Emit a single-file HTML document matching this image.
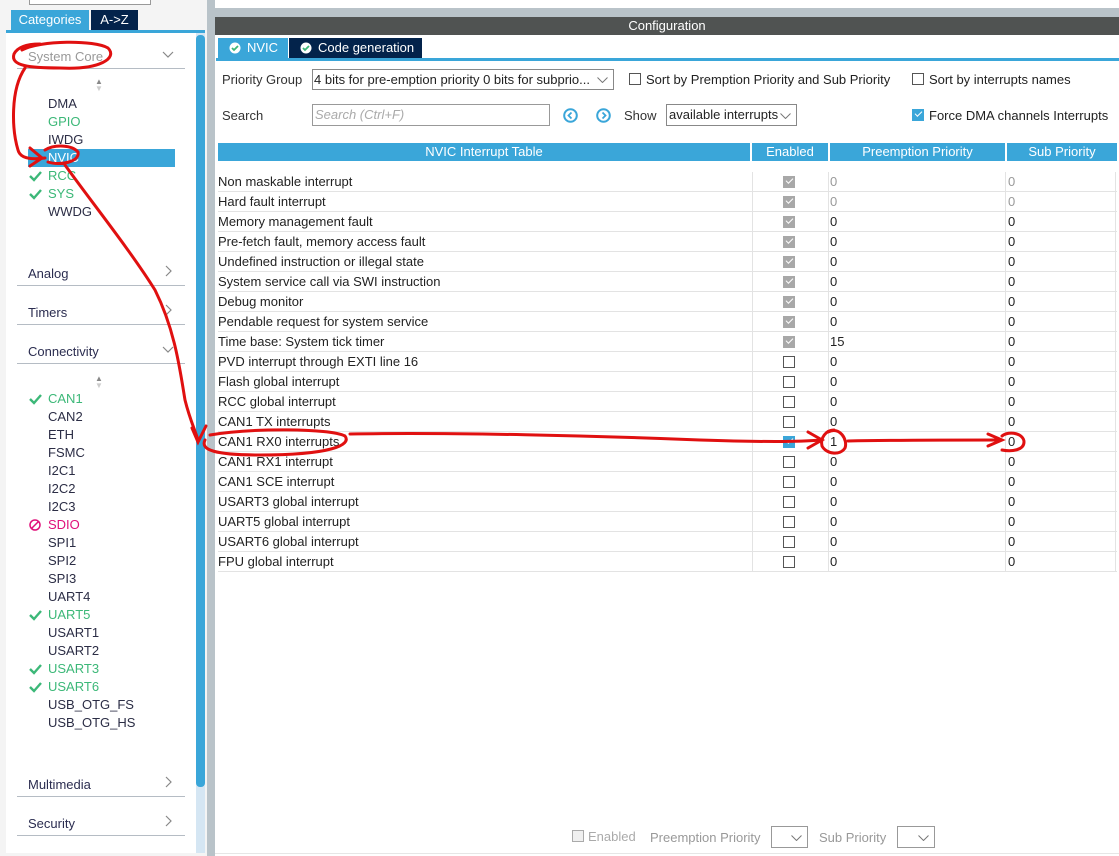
<!DOCTYPE html>
<html><head><meta charset="utf-8"><style>
*{margin:0;padding:0;box-sizing:border-box}
body{width:1119px;height:856px;overflow:hidden;background:#fff;font-family:"Liberation Sans",sans-serif;font-size:13px;color:#222;position:relative}
.a{position:absolute;white-space:nowrap}
.blue{background:#3aa6d9}
.navy{background:#03234b}
.si{position:absolute;left:48px;font-size:13px;color:#2b2d45;line-height:18px}
.g{color:#3cb878}
.ck{position:absolute;left:29px;top:0;width:13px;height:18px}
.cat{position:absolute;left:28px;font-size:13px;color:#2b2d50}
.cl{position:absolute;left:17px;width:168px;height:1px;background:#b5bcc4}
.chev{position:absolute;left:162px;width:12px;height:12px}
.row{position:absolute;left:218px;width:899px;height:20px;border-bottom:1px solid #e3e3e3;font-size:13px;line-height:19px}
.row .n{position:absolute;left:0}
.row .v1{position:absolute;left:612px}
.row .v2{position:absolute;left:790px}
.row .c1{position:absolute;left:534px;top:0;width:1px;height:20px;background:#e3e3e3}
.row .c2{position:absolute;left:610px;top:0;width:1px;height:20px;background:#e3e3e3}
.row .c3{position:absolute;left:787px;top:0;width:1px;height:20px;background:#e3e3e3}
.row .c4{position:absolute;left:897px;top:0;width:1px;height:20px;background:#e3e3e3}
.cb{position:absolute;left:565px;top:4px;width:12px;height:12px;border:1px solid #555;background:#fff}
.cbg,.cbb{position:absolute;left:565px;top:4px;width:12px;height:12px;background:#a8a8a8}
.cbb{background:#3aa6d9}
.cbg::after,.cbb::after{content:"";position:absolute;left:3px;top:2px;width:6px;height:3px;border-left:1.5px solid #fff;border-bottom:1.5px solid #fff;transform:rotate(-45deg)}
.gr{color:#999}
.dd{position:absolute;right:5px;top:7px;width:11px;height:6px}
</style></head><body>
<svg width="0" height="0" style="position:absolute">
<defs>
<symbol id="chk" viewBox="0 0 13 18"><path d="M1 9 L5 13 L12 5" fill="none" stroke="#3cb878" stroke-width="2.4"/></symbol>
<symbol id="dn" viewBox="0 0 12 12"><path d="M1 4 L6 9 L11 4" fill="none" stroke="#888" stroke-width="1.2"/></symbol>
<symbol id="rt" viewBox="0 0 12 12"><path d="M4 1 L9 6 L4 11" fill="none" stroke="#888" stroke-width="1.2"/></symbol>
<symbol id="dd" viewBox="0 0 11 6"><path d="M0.5 0.5 L5.5 5.5 L10.5 0.5" fill="none" stroke="#777" stroke-width="1"/></symbol>
</defs></svg>
<!-- left panel -->
<div class="a" style="left:0;top:0;width:207px;height:856px;background:#f4f4f4"></div>
<div class="a" style="left:29px;top:0;width:122px;height:5px;border:1px solid #999;border-top:none;background:#fff"></div>
<div class="a blue" style="left:11px;top:10px;width:78px;height:20px;color:#fff;font-size:13px;line-height:20px;text-align:center">Categories</div>
<div class="a navy" style="left:91px;top:10px;width:47px;height:20px;color:#fff;font-size:13px;line-height:20px;text-align:center">A-&gt;Z</div>
<div class="a blue" style="left:6px;top:30px;width:199px;height:3px"></div>
<div class="a" style="left:6px;top:33px;width:190px;height:820px;background:#fff"></div>
<div class="a" style="left:196px;top:33px;width:9px;height:820px;background:#d5e6f3"></div>
<div class="a blue" style="left:196px;top:35px;width:9px;height:752px;border-radius:4px"></div>

<div class="cat" style="top:49px;color:#999">System Core</div><svg class="chev" style="top:48px"><use href="#dn"/></svg>
<div class="cl" style="top:68px"></div>
<div class="a" style="left:95px;top:78px;font-size:8px;color:#888;line-height:7px">▲<br><span style="color:#ccc">▼</span></div>
<div class="si" style="top:95px">DMA</div>
<div class="si g" style="top:113px">GPIO</div>
<div class="si" style="top:131px">IWDG</div>
<div class="a blue" style="left:28px;top:149px;width:147px;height:18px"></div>
<div class="si" style="top:149px;color:#fff">NVIC</div>
<svg class="ck" style="top:167px"><use href="#chk"/></svg><div class="si g" style="top:167px">RCC</div>
<svg class="ck" style="top:185px"><use href="#chk"/></svg><div class="si g" style="top:185px">SYS</div>
<div class="si" style="top:203px">WWDG</div>

<div class="cat" style="top:266px">Analog</div><svg class="chev" style="top:265px"><use href="#rt"/></svg><div class="cl" style="top:285px"></div>
<div class="cat" style="top:305px">Timers</div><svg class="chev" style="top:304px"><use href="#rt"/></svg><div class="cl" style="top:324px"></div>
<div class="cat" style="top:344px">Connectivity</div><svg class="chev" style="top:343px"><use href="#dn"/></svg><div class="cl" style="top:363px"></div>
<div class="a" style="left:95px;top:375px;font-size:8px;color:#888;line-height:7px">▲<br><span style="color:#ccc">▼</span></div>
<svg class="ck" style="top:390px"><use href="#chk"/></svg><div class="si g" style="top:390px">CAN1</div>
<div class="si" style="top:408px">CAN2</div>
<div class="si" style="top:426px">ETH</div>
<div class="si" style="top:444px">FSMC</div>
<div class="si" style="top:462px">I2C1</div>
<div class="si" style="top:480px">I2C2</div>
<div class="si" style="top:498px">I2C3</div>
<svg class="ck" style="top:516px" viewBox="0 0 13 18"><circle cx="6" cy="9" r="5" fill="none" stroke="#e0107a" stroke-width="1.5"/><path d="M2.5 12.5 L9.5 5.5" stroke="#e0107a" stroke-width="1.5"/></svg><div class="si" style="top:516px;color:#e0107a">SDIO</div>
<div class="si" style="top:534px">SPI1</div>
<div class="si" style="top:552px">SPI2</div>
<div class="si" style="top:570px">SPI3</div>
<div class="si" style="top:588px">UART4</div>
<svg class="ck" style="top:606px"><use href="#chk"/></svg><div class="si g" style="top:606px">UART5</div>
<div class="si" style="top:624px">USART1</div>
<div class="si" style="top:642px">USART2</div>
<svg class="ck" style="top:660px"><use href="#chk"/></svg><div class="si g" style="top:660px">USART3</div>
<svg class="ck" style="top:678px"><use href="#chk"/></svg><div class="si g" style="top:678px">USART6</div>
<div class="si" style="top:696px">USB_OTG_FS</div>
<div class="si" style="top:714px">USB_OTG_HS</div>
<div class="cat" style="top:777px">Multimedia</div><svg class="chev" style="top:776px"><use href="#rt"/></svg><div class="cl" style="top:796px"></div>
<div class="cat" style="top:816px">Security</div><svg class="chev" style="top:815px"><use href="#rt"/></svg><div class="cl" style="top:835px"></div>

<!-- separator -->
<div class="a" style="left:207px;top:0;width:8px;height:856px;background:#b9c3c9"></div>
<!-- right -->
<div class="a" style="left:215px;top:8px;width:904px;height:9px;background:#b9c3c9"></div>
<div class="a" style="left:215px;top:17px;width:904px;height:18px;background:#505352;color:#fff;text-align:center;line-height:18px;font-size:13px">Configuration</div>
<div class="a blue" style="left:218px;top:38px;width:70px;height:20px;color:#fff;line-height:20px;font-size:13px"><svg style="position:absolute;left:11px;top:4px" width="12" height="12"><circle cx="6" cy="6" r="5.5" fill="#fff"/><path d="M3 6 L5 8 L9 4" fill="none" stroke="#3cb878" stroke-width="1.8"/></svg><span style="position:absolute;left:29px">NVIC</span></div>
<div class="a navy" style="left:289px;top:38px;width:133px;height:20px;color:#fff;line-height:20px;font-size:13px"><svg style="position:absolute;left:11px;top:4px" width="12" height="12"><circle cx="6" cy="6" r="5.5" fill="#fff"/><path d="M3 6 L5 8 L9 4" fill="none" stroke="#3cb878" stroke-width="1.8"/></svg><span style="position:absolute;left:29px">Code generation</span></div>
<div class="a blue" style="left:216px;top:58px;width:903px;height:3px"></div>

<div class="a" style="left:222px;top:72px;color:#333">Priority Group</div>
<div class="a" style="left:312px;top:69px;width:302px;height:21px;border:1px solid #888;line-height:19px;padding-left:1px;color:#222">4 bits for pre-emption priority 0 bits for subprio...<svg class="dd"><use href="#dd"/></svg></div>
<div class="a" style="left:629px;top:73px;width:12px;height:12px;border:1px solid #555"></div>
<div class="a" style="left:646px;top:72px">Sort by Premption Priority and Sub Priority</div>
<div class="a" style="left:912px;top:73px;width:12px;height:12px;border:1px solid #555"></div>
<div class="a" style="left:929px;top:72px">Sort by interrupts names</div>
<div class="a" style="left:222px;top:108px;color:#333">Search</div>
<div class="a" style="left:312px;top:104px;width:238px;height:22px;border:1px solid #999;color:#aaa;font-style:italic;line-height:20px;padding-left:2px">Search (Ctrl+F)</div>
<svg class="a" style="left:563px;top:108px" width="15" height="15"><circle cx="7.5" cy="7.5" r="6.3" fill="none" stroke="#3aa6d9" stroke-width="2"/><path d="M8.5 4.5 L5.5 7.5 L8.5 10.5" fill="none" stroke="#3aa6d9" stroke-width="1.8"/></svg>
<svg class="a" style="left:596px;top:108px" width="15" height="15"><circle cx="7.5" cy="7.5" r="6.3" fill="none" stroke="#3aa6d9" stroke-width="2"/><path d="M6.5 4.5 L9.5 7.5 L6.5 10.5" fill="none" stroke="#3aa6d9" stroke-width="1.8"/></svg>
<div class="a" style="left:624px;top:108px;color:#333">Show</div>
<div class="a" style="left:666px;top:104px;width:131px;height:22px;border:1px solid #888;line-height:20px;padding-left:2px">available interrupts<svg class="dd" style="top:8px"><use href="#dd"/></svg></div>
<div class="a" style="left:912px;top:109px;width:12px;height:12px"><div class="cbb" style="left:0;top:0"></div></div>
<div class="a" style="left:929px;top:108px">Force DMA channels Interrupts</div>

<div class="a blue" style="left:218px;top:143px;width:532px;height:18px;color:#fff;text-align:center;line-height:18px">NVIC Interrupt Table</div>
<div class="a blue" style="left:752px;top:143px;width:76px;height:18px;color:#fff;text-align:center;line-height:18px">Enabled</div>
<div class="a blue" style="left:830px;top:143px;width:175px;height:18px;color:#fff;text-align:center;line-height:18px">Preemption Priority</div>
<div class="a blue" style="left:1007px;top:143px;width:110px;height:18px;color:#fff;text-align:center;line-height:18px">Sub Priority</div>

<div class="row" style="top:172px"><span class="n">Non maskable interrupt</span><i class="c1"></i><div class="cbg"></div><i class="c2"></i><span class="v1 gr">0</span><i class="c3"></i><span class="v2 gr">0</span><i class="c4"></i></div>
<div class="row" style="top:192px"><span class="n">Hard fault interrupt</span><i class="c1"></i><div class="cbg"></div><i class="c2"></i><span class="v1 gr">0</span><i class="c3"></i><span class="v2 gr">0</span><i class="c4"></i></div>
<div class="row" style="top:212px"><span class="n">Memory management fault</span><i class="c1"></i><div class="cbg"></div><i class="c2"></i><span class="v1">0</span><i class="c3"></i><span class="v2">0</span><i class="c4"></i></div>
<div class="row" style="top:232px"><span class="n">Pre-fetch fault, memory access fault</span><i class="c1"></i><div class="cbg"></div><i class="c2"></i><span class="v1">0</span><i class="c3"></i><span class="v2">0</span><i class="c4"></i></div>
<div class="row" style="top:252px"><span class="n">Undefined instruction or illegal state</span><i class="c1"></i><div class="cbg"></div><i class="c2"></i><span class="v1">0</span><i class="c3"></i><span class="v2">0</span><i class="c4"></i></div>
<div class="row" style="top:272px"><span class="n">System service call via SWI instruction</span><i class="c1"></i><div class="cbg"></div><i class="c2"></i><span class="v1">0</span><i class="c3"></i><span class="v2">0</span><i class="c4"></i></div>
<div class="row" style="top:292px"><span class="n">Debug monitor</span><i class="c1"></i><div class="cbg"></div><i class="c2"></i><span class="v1">0</span><i class="c3"></i><span class="v2">0</span><i class="c4"></i></div>
<div class="row" style="top:312px"><span class="n">Pendable request for system service</span><i class="c1"></i><div class="cbg"></div><i class="c2"></i><span class="v1">0</span><i class="c3"></i><span class="v2">0</span><i class="c4"></i></div>
<div class="row" style="top:332px"><span class="n">Time base: System tick timer</span><i class="c1"></i><div class="cbg"></div><i class="c2"></i><span class="v1">15</span><i class="c3"></i><span class="v2">0</span><i class="c4"></i></div>
<div class="row" style="top:352px"><span class="n">PVD interrupt through EXTI line 16</span><i class="c1"></i><div class="cb"></div><i class="c2"></i><span class="v1">0</span><i class="c3"></i><span class="v2">0</span><i class="c4"></i></div>
<div class="row" style="top:372px"><span class="n">Flash global interrupt</span><i class="c1"></i><div class="cb"></div><i class="c2"></i><span class="v1">0</span><i class="c3"></i><span class="v2">0</span><i class="c4"></i></div>
<div class="row" style="top:392px"><span class="n">RCC global interrupt</span><i class="c1"></i><div class="cb"></div><i class="c2"></i><span class="v1">0</span><i class="c3"></i><span class="v2">0</span><i class="c4"></i></div>
<div class="row" style="top:412px"><span class="n">CAN1 TX interrupts</span><i class="c1"></i><div class="cb"></div><i class="c2"></i><span class="v1">0</span><i class="c3"></i><span class="v2">0</span><i class="c4"></i></div>
<div class="row" style="top:432px"><span class="n">CAN1 RX0 interrupts</span><i class="c1"></i><div class="cbb"></div><i class="c2"></i><span class="v1">1</span><i class="c3"></i><span class="v2">0</span><i class="c4"></i></div>
<div class="row" style="top:452px"><span class="n">CAN1 RX1 interrupt</span><i class="c1"></i><div class="cb"></div><i class="c2"></i><span class="v1">0</span><i class="c3"></i><span class="v2">0</span><i class="c4"></i></div>
<div class="row" style="top:472px"><span class="n">CAN1 SCE interrupt</span><i class="c1"></i><div class="cb"></div><i class="c2"></i><span class="v1">0</span><i class="c3"></i><span class="v2">0</span><i class="c4"></i></div>
<div class="row" style="top:492px"><span class="n">USART3 global interrupt</span><i class="c1"></i><div class="cb"></div><i class="c2"></i><span class="v1">0</span><i class="c3"></i><span class="v2">0</span><i class="c4"></i></div>
<div class="row" style="top:512px"><span class="n">UART5 global interrupt</span><i class="c1"></i><div class="cb"></div><i class="c2"></i><span class="v1">0</span><i class="c3"></i><span class="v2">0</span><i class="c4"></i></div>
<div class="row" style="top:532px"><span class="n">USART6 global interrupt</span><i class="c1"></i><div class="cb"></div><i class="c2"></i><span class="v1">0</span><i class="c3"></i><span class="v2">0</span><i class="c4"></i></div>
<div class="row" style="top:552px"><span class="n">FPU global interrupt</span><i class="c1"></i><div class="cb"></div><i class="c2"></i><span class="v1">0</span><i class="c3"></i><span class="v2">0</span><i class="c4"></i></div>

<div class="a" style="left:572px;top:830px;width:12px;height:12px;border:1px solid #aaa;background:#f0f0f0"></div>
<div class="a" style="left:588px;top:829px;color:#aaa">Enabled</div>
<div class="a" style="left:650px;top:830px;color:#999">Preemption Priority</div>
<div class="a" style="left:771px;top:826px;width:37px;height:22px;border:1px solid #999"><svg class="dd" style="top:8px"><use href="#dd"/></svg></div>
<div class="a" style="left:819px;top:830px;color:#999">Sub Priority</div>
<div class="a" style="left:897px;top:826px;width:38px;height:22px;border:1px solid #999"><svg class="dd" style="top:8px"><use href="#dd"/></svg></div>
<div class="a" style="left:215px;top:853px;width:904px;height:1px;background:#e6e6e6"></div>

<svg class="a" style="left:0;top:0" width="1119" height="856" fill="none" stroke="#e01010" stroke-width="3" stroke-linecap="round">
<path d="M22 50 C40 40 95 40 108 48 C118 58 100 70 60 68 C30 68 10 66 14 54 C18 46 30 44 40 44"/>
<path d="M25 68 C10 90 12 130 18 150 C20 158 30 160 45 158"/>
<path d="M30 148 L42 158 L30 166"/>
<path d="M45 150 C55 144 72 145 78 152 C80 162 60 166 48 162"/>
<path d="M65 165 C90 200 130 250 155 290 C175 330 180 370 185 400 C190 420 195 430 198 440"/>
<path d="M192 428 L198 442 L206 426"/>
<path d="M210 435 C250 428 330 428 345 436 C352 445 330 455 260 455 C215 455 200 450 205 440"/>
<path d="M350 434 C450 432 600 436 700 440 C760 442 800 442 820 440"/>
<path d="M808 432 L822 440 L808 448"/>
<path d="M828 432 C840 426 848 440 845 448 C840 456 826 454 822 446 C820 438 826 430 834 430"/>
<path d="M848 441 C900 440 960 440 1000 440"/>
<path d="M988 434 L1002 440 L988 446"/>
<path d="M1002 436 C1010 430 1024 434 1024 442 C1024 450 1012 452 1002 450"/>
</svg>
</body></html>
